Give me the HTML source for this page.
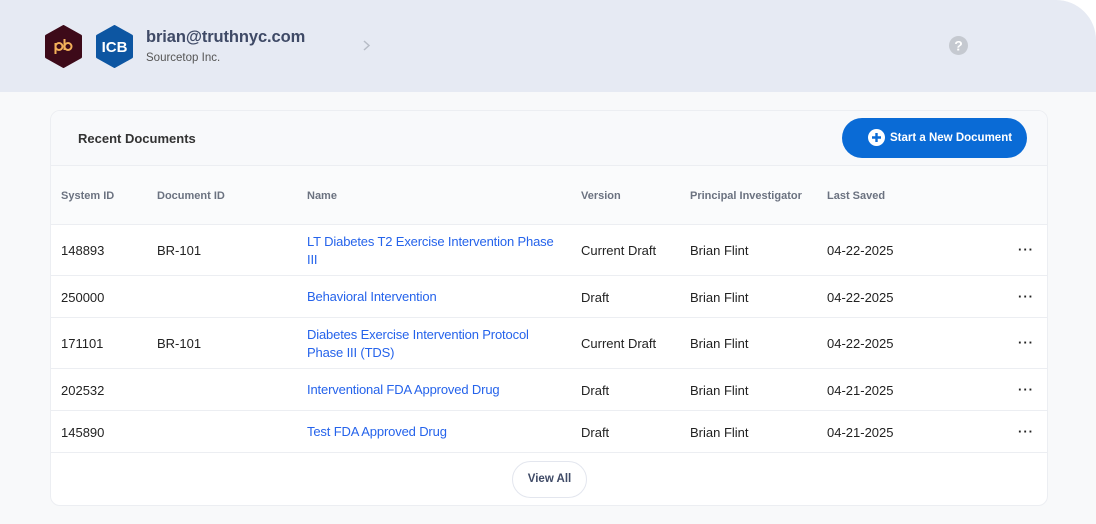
<!DOCTYPE html>
<html><head><style>
*{margin:0;padding:0;box-sizing:border-box}
body{width:1096px;height:524px;background:#fff;font-family:"Liberation Sans",Arial,sans-serif;position:relative;overflow:hidden}
.page{position:absolute;left:0;top:0;width:1096px;height:524px;background:#f8f9fa;border-radius:0 40px 0 0;overflow:hidden}
.hdr{position:absolute;left:0;top:0;width:1096px;height:92px;background:#e6eaf3}
.t{position:absolute;white-space:nowrap}
.card{position:absolute;left:50px;top:110px;width:998px;height:396px;background:#fff;border:1px solid #eceef2;border-radius:10px;overflow:hidden}
.ch{position:absolute;left:0;top:0;width:100%;height:55px;background:#f8f9fb;border-bottom:1px solid #eceef2}
.th{position:absolute;left:0;top:55px;width:100%;height:59px;background:#fafbfc;border-bottom:1px solid #eceef2}
.h{position:absolute;font-size:11px;font-weight:bold;color:#6b7280;top:79px}
.row{position:absolute;left:0;width:100%;border-bottom:1px solid #eceef2;font-size:13px;color:#222}
.row span{position:absolute}
.a{color:#2563eb;line-height:18px;letter-spacing:-0.15px}
.dots{font-weight:bold;letter-spacing:1px}
</style></head><body>
<div class="page">
<div class="hdr">
<svg style="position:absolute;left:44px;top:25px" width="39" height="43" viewBox="0 0 39 43"><path d="M19.5 1.5 L36.5 11 V32 L19.5 41.5 L2.5 32 V11Z" fill="#3d0a19" stroke="#3d0a19" stroke-width="3" stroke-linejoin="round"/>
<g fill="none" stroke="#f3b05a" stroke-width="2"><path d="M11.5 29V18"/><circle cx="15" cy="21.5" r="3.5"/><circle cx="24" cy="21.5" r="3.5"/><path d="M20.5 25V14"/></g></svg>
<svg style="position:absolute;left:95px;top:25px" width="39" height="43" viewBox="0 0 39 43"><path d="M19.5 1.5 L36.5 11 V32 L19.5 41.5 L2.5 32 V11Z" fill="#0d56a2" stroke="#0d56a2" stroke-width="3" stroke-linejoin="round"/>
<text x="19.5" y="27" text-anchor="middle" font-family="Liberation Sans" font-weight="bold" font-size="15" fill="#fff">ICB</text></svg>
<div class="t" style="left:146px;top:28px;font-size:16.5px;font-weight:bold;color:#3f4a66;letter-spacing:-0.1px">brian@truthnyc.com</div>
<div class="t" style="left:146px;top:52px;font-size:11.5px;color:#555">Sourcetop Inc.</div>
<svg style="position:absolute;left:362px;top:39px" width="10" height="13"><path d="M2 2l5 4.5-5 4.5" fill="none" stroke="#b7bcc6" stroke-width="1.5"/></svg>
<svg style="position:absolute;left:948px;top:35px" width="21" height="21"><circle cx="10.5" cy="10.5" r="9.5" fill="#c5c9d0"/><text x="10.5" y="15.5" text-anchor="middle" font-family="Liberation Sans" font-weight="bold" font-size="14" fill="#fff">?</text></svg>
</div>
<div class="card">
<div class="ch"></div>
<div class="t" style="left:27px;top:20px;font-size:13px;font-weight:bold;color:#333">Recent Documents</div>
<div style="position:absolute;left:791px;top:7px;width:185px;height:40px;background:#0a6bd6;border-radius:20px"></div>
<svg style="position:absolute;left:817px;top:18px" width="17" height="17"><circle cx="8.5" cy="8.5" r="8.5" fill="#fff"/><path d="M8.5 4v9M4 8.5h9" stroke="#0a6bd6" stroke-width="2.4"/></svg>
<div class="t" style="left:839px;top:20px;font-size:11.5px;line-height:14px;font-weight:bold;color:#fff">Start a New Document</div>
<div class="th"></div>
<div class="h" style="left:10px">System ID</div>
<div class="h" style="left:106px">Document ID</div>
<div class="h" style="left:256px">Name</div>
<div class="h" style="left:530px">Version</div>
<div class="h" style="left:639px">Principal Investigator</div>
<div class="h" style="left:776px">Last Saved</div>

<div class="row" style="top:114px;height:51px"><span style="left:10px;top:18px">148893</span><span style="left:106px;top:18px">BR-101</span><span class="a" style="left:256px;top:8px;width:250px">LT Diabetes T2 Exercise Intervention Phase III</span><span style="left:530px;top:18px">Current Draft</span><span style="left:639px;top:18px">Brian Flint</span><span style="left:776px;top:18px">04-22-2025</span><span class="dots" style="left:967px;top:17px">···</span></div>
<div class="row" style="top:165px;height:42px"><span style="left:10px;top:14px">250000</span><span class="a" style="left:256px;top:12px">Behavioral Intervention</span><span style="left:530px;top:14px">Draft</span><span style="left:639px;top:14px">Brian Flint</span><span style="left:776px;top:14px">04-22-2025</span><span class="dots" style="left:967px;top:13px">···</span></div>
<div class="row" style="top:207px;height:51px"><span style="left:10px;top:18px">171101</span><span style="left:106px;top:18px">BR-101</span><span class="a" style="left:256px;top:8px;width:240px">Diabetes Exercise Intervention Protocol Phase III (TDS)</span><span style="left:530px;top:18px">Current Draft</span><span style="left:639px;top:18px">Brian Flint</span><span style="left:776px;top:18px">04-22-2025</span><span class="dots" style="left:967px;top:17px">···</span></div>
<div class="row" style="top:258px;height:42px"><span style="left:10px;top:14px">202532</span><span class="a" style="left:256px;top:12px">Interventional FDA Approved Drug</span><span style="left:530px;top:14px">Draft</span><span style="left:639px;top:14px">Brian Flint</span><span style="left:776px;top:14px">04-21-2025</span><span class="dots" style="left:967px;top:13px">···</span></div>
<div class="row" style="top:300px;height:42px"><span style="left:10px;top:14px">145890</span><span class="a" style="left:256px;top:12px">Test FDA Approved Drug</span><span style="left:530px;top:14px">Draft</span><span style="left:639px;top:14px">Brian Flint</span><span style="left:776px;top:14px">04-21-2025</span><span class="dots" style="left:967px;top:13px">···</span></div>

<div style="position:absolute;left:461px;top:350px;width:75px;height:37px;border:1.5px solid #e3e6ee;border-radius:19px;background:#fff;text-align:center;line-height:34px;font-size:11.5px;font-weight:bold;color:#3f4a66">View All</div>
</div>
</div>
</body></html>
